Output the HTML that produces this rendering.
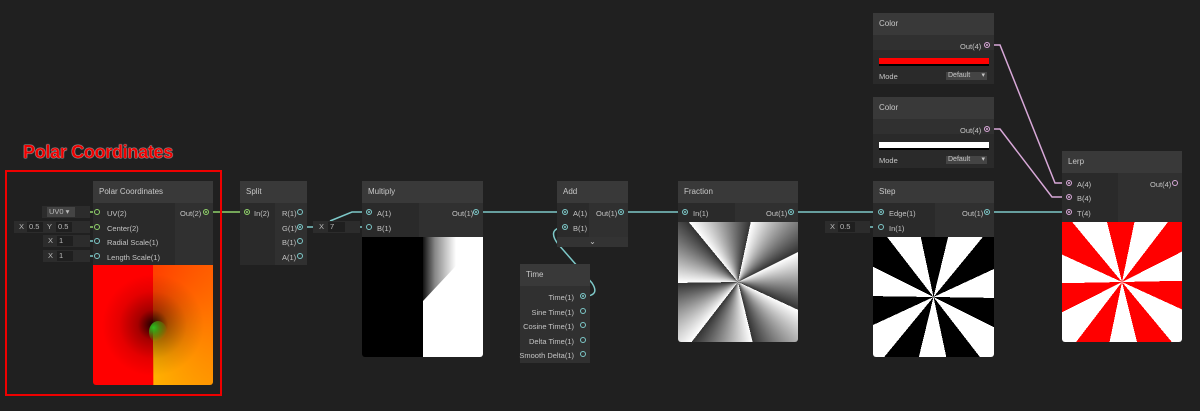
<!DOCTYPE html><html><head><meta charset="utf-8"><style>
*{margin:0;padding:0;box-sizing:border-box}
body{width:1200px;height:411px;background:#202020;position:relative;overflow:hidden;font-family:"Liberation Sans",sans-serif;font-size:7.5px;color:#c4c4c4}
.a{position:absolute}
.hd{background:#393939;color:#c8c8c8;font-size:8px;padding:6px 0 0 6px}
.bl{background:#2a2a2a}.br{background:#303030}
.t{position:absolute;white-space:nowrap}
.f{position:absolute;background:#2c2c2c;height:12px;color:#bbb;font-size:7.5px;line-height:12px}
.f span{position:absolute;background:#1f1f1f;top:1px;height:10px;line-height:10px;padding-left:2px}
.p{position:absolute;width:6px;height:6px;border-radius:50%;border:1.3px solid #7dc8c8}
.p.fill{background:#7dc8c8;box-shadow:inset 0 0 0 1px #2a2a2a}
.g{border-color:#8fd16a}.g.fill{background:#8fd16a}
.k{border-color:#d8a8d8}.k.fill{background:#d8a8d8}
</style></head><body>

<svg class="a" style="left:0;top:0" width="1200" height="411">
<g fill="none" stroke-width="1.5">
<path d="M208 212 L246 212" stroke="#8fd16a"/>
<path d="M301 227 L315 227" stroke="#7dc8c8"/>
<path d="M330 221 L352 212 L369 212" stroke="#7dc8c8"/>
<path d="M476 212 L565 212" stroke="#7dc8c8"/>
<path d="M621 212 L686 212" stroke="#7dc8c8"/>
<path d="M791 212 L881 212" stroke="#7dc8c8"/>
<path d="M987 212 L1069 212" stroke="#7dc8c8"/>
<path d="M565 227 C550 228 552 236 558 244 L592 283 C598 292 594 296 585 296" stroke="#7dc8c8"/>
<path d="M987 45 L1000 45 L1055 183 L1069 183" stroke="#d8a8d8"/>
<path d="M987 129 L1000 129 L1052 197 L1069 197" stroke="#d8a8d8"/>
<path d="M83 212 L98 212 M83 227 L98 227" stroke="#8fd16a"/>
<path d="M83 241 L98 241 M83 256 L98 256 M350 227 L369 227 M864 227 L881 227" stroke="#7dc8c8"/>
</g></svg>

<div class="a" style="left:23px;top:142px;font-size:18px;font-weight:bold;color:#e00;letter-spacing:-0.3px;text-shadow:0 0 1px #fff,0 0 1px #fff">Polar Coordinates</div>
<div class="a" style="left:5px;top:170px;width:217px;height:226px;border:2px solid #e00"></div>

<!-- Polar node -->
<div class="a hd" style="left:93px;top:181px;width:120px;height:22px">Polar Coordinates</div>
<div class="a bl" style="left:93px;top:203px;width:82px;height:62px"></div>
<div class="a br" style="left:175px;top:203px;width:38px;height:62px"></div>
<div class="a" style="left:93px;top:265px;width:120px;height:120px;border-radius:0 0 3px 3px;background:conic-gradient(from 0deg at 50% 50%,#ff4000,#ff7a00 25%,#ffb000 49.8%,#f00 50%,#f00 100%)"></div>
<div class="a" style="left:93px;top:265px;width:120px;height:120px;background:radial-gradient(circle at 50% 50%,rgba(0,0,0,.9) 0,rgba(0,0,0,.35) 18%,rgba(0,0,0,.1) 40%,transparent 60%)"></div>
<div class="a" style="left:149px;top:321px;width:18px;height:22px;border-radius:50%;background:radial-gradient(circle at 25% 30%,#30c020 0,rgba(80,190,20,.5) 35%,transparent 70%)"></div>
<div class="p g" style="left:94px;top:209px"></div><div class="t" style="left:107px;top:209px">UV(2)</div>
<div class="p g" style="left:94px;top:224px"></div><div class="t" style="left:107px;top:224px">Center(2)</div>
<div class="p" style="left:94px;top:238px"></div><div class="t" style="left:107px;top:238px">Radial Scale(1)</div>
<div class="p" style="left:94px;top:253px"></div><div class="t" style="left:107px;top:253px">Length Scale(1)</div>
<div class="t" style="left:180px;top:209px">Out(2)</div><div class="p g fill" style="left:203px;top:209px"></div>

<div class="f" style="left:42px;top:206px;width:48px"><span style="left:5px;width:28px;background:#444">UV0 ▾</span></div>
<div class="f" style="left:14px;top:221px;width:76px"><b style="font-weight:normal;position:absolute;left:5px">X</b><span style="left:13px;width:16px">0.5</span><b style="font-weight:normal;position:absolute;left:33px">Y</b><span style="left:42px;width:16px">0.5</span></div>
<div class="f" style="left:43px;top:235px;width:47px"><b style="font-weight:normal;position:absolute;left:5px">X</b><span style="left:14px;width:16px">1</span></div>
<div class="f" style="left:43px;top:250px;width:47px"><b style="font-weight:normal;position:absolute;left:5px">X</b><span style="left:14px;width:16px">1</span></div>

<!-- Split -->
<div class="a hd" style="left:240px;top:181px;width:67px;height:22px">Split</div>
<div class="a bl" style="left:240px;top:203px;width:35px;height:62px"></div>
<div class="a br" style="left:275px;top:203px;width:32px;height:62px"></div>
<div class="p g fill" style="left:244px;top:209px"></div><div class="t" style="left:254px;top:209px">In(2)</div>
<div class="t" style="left:282px;top:209px">R(1)</div><div class="p" style="left:297px;top:209px"></div>
<div class="t" style="left:282px;top:224px">G(1)</div><div class="p fill" style="left:297px;top:224px"></div>
<div class="t" style="left:282px;top:238px">B(1)</div><div class="p" style="left:297px;top:238px"></div>
<div class="t" style="left:282px;top:253px">A(1)</div><div class="p" style="left:297px;top:253px"></div>

<div class="f" style="left:313px;top:221px;width:47px"><b style="font-weight:normal;position:absolute;left:6px">X</b><span style="left:15px;width:17px">7</span></div>

<!-- Multiply -->
<div class="a hd" style="left:362px;top:181px;width:121px;height:22px">Multiply</div>
<div class="a bl" style="left:362px;top:203px;width:57px;height:34px"></div>
<div class="a br" style="left:419px;top:203px;width:64px;height:34px"></div>
<div class="a" style="left:362px;top:237px;width:121px;height:120px;border-radius:0 0 3px 3px;background:linear-gradient(90deg,#000 50.5%,#fff 50.5%)"></div>
<div class="a" style="left:423px;top:237px;width:60px;height:64px;clip-path:polygon(0 0,100% 0,0 100%);background:linear-gradient(90deg,#111 0,#888 20%,#fff 55%)"></div>
<div class="p fill" style="left:366px;top:209px"></div><div class="t" style="left:377px;top:209px">A(1)</div>
<div class="p" style="left:366px;top:224px"></div><div class="t" style="left:377px;top:224px">B(1)</div>
<div class="t" style="left:452px;top:209px">Out(1)</div><div class="p fill" style="left:473px;top:209px"></div>

<!-- Add -->
<div class="a hd" style="left:557px;top:181px;width:71px;height:22px">Add</div>
<div class="a bl" style="left:557px;top:203px;width:32px;height:34px"></div>
<div class="a br" style="left:589px;top:203px;width:39px;height:34px"></div>
<div class="a" style="left:557px;top:237px;width:71px;height:10px;background:#333;text-align:center;font-size:8px;line-height:9px">⌄</div>
<div class="p fill" style="left:562px;top:209px"></div><div class="t" style="left:573px;top:209px">A(1)</div>
<div class="p fill" style="left:562px;top:224px"></div><div class="t" style="left:573px;top:224px">B(1)</div>
<div class="t" style="left:596px;top:209px">Out(1)</div><div class="p fill" style="left:618px;top:209px"></div>

<!-- Time -->
<div class="a hd" style="left:520px;top:264px;width:70px;height:22px">Time</div>
<div class="a br" style="left:520px;top:286px;width:70px;height:77px"></div>
<div class="t" style="right:626px;top:293px">Time(1)</div><div class="p fill" style="left:580px;top:293px"></div>
<div class="t" style="right:626px;top:308px">Sine Time(1)</div><div class="p" style="left:580px;top:308px"></div>
<div class="t" style="right:626px;top:322px">Cosine Time(1)</div><div class="p" style="left:580px;top:322px"></div>
<div class="t" style="right:626px;top:337px">Delta Time(1)</div><div class="p" style="left:580px;top:337px"></div>
<div class="t" style="right:626px;top:351px">Smooth Delta(1)</div><div class="p" style="left:580px;top:351px"></div>

<!-- Fraction -->
<div class="a hd" style="left:678px;top:181px;width:120px;height:22px">Fraction</div>
<div class="a bl" style="left:678px;top:203px;width:57px;height:19px"></div>
<div class="a br" style="left:735px;top:203px;width:63px;height:19px"></div>
<div class="a" style="left:678px;top:222px;width:120px;height:120px;border-radius:0 0 3px 3px;background:repeating-conic-gradient(from 12deg at 50% 50%,#fff 0deg,#333 51.43deg)"></div>
<div class="p fill" style="left:682px;top:209px"></div><div class="t" style="left:693px;top:209px">In(1)</div>
<div class="t" style="left:766px;top:209px">Out(1)</div><div class="p fill" style="left:788px;top:209px"></div>

<!-- Step -->
<div class="f" style="left:825px;top:221px;width:45px"><b style="font-weight:normal;position:absolute;left:5px">X</b><span style="left:13px;width:17px">0.5</span></div>
<div class="a hd" style="left:873px;top:181px;width:121px;height:22px">Step</div>
<div class="a bl" style="left:873px;top:203px;width:62px;height:34px"></div>
<div class="a br" style="left:935px;top:203px;width:59px;height:34px"></div>
<div class="a" style="left:873px;top:237px;width:121px;height:120px;border-radius:0 0 3px 3px;background:repeating-conic-gradient(from -12deg at 50% 50%,#000 0 25.7deg,#fff 25.7deg 51.43deg)"></div>
<div class="p fill" style="left:878px;top:209px"></div><div class="t" style="left:889px;top:209px">Edge(1)</div>
<div class="p" style="left:878px;top:224px"></div><div class="t" style="left:889px;top:224px">In(1)</div>
<div class="t" style="left:962px;top:209px">Out(1)</div><div class="p fill" style="left:984px;top:209px"></div>

<!-- Color 1 -->
<div class="a hd" style="left:873px;top:13px;width:121px;height:22px">Color</div>
<div class="a br" style="left:873px;top:35px;width:121px;height:15px"></div>
<div class="a bl" style="left:873px;top:50px;width:121px;height:34px"></div>
<div class="a" style="left:879px;top:58px;width:110px;height:8px;background:#f00;border-bottom:2px solid #000"></div>
<div class="t" style="left:960px;top:42px">Out(4)</div><div class="p k fill" style="left:984px;top:42px"></div>
<div class="t" style="left:879px;top:72px">Mode</div>
<div class="a" style="left:946px;top:72px;width:41px;height:8px;background:#444;font-size:7px;line-height:8px;padding-left:2px">Default <span style="float:right;padding-right:2px">▾</span></div>

<!-- Color 2 -->
<div class="a hd" style="left:873px;top:97px;width:121px;height:22px">Color</div>
<div class="a br" style="left:873px;top:119px;width:121px;height:15px"></div>
<div class="a bl" style="left:873px;top:134px;width:121px;height:34px"></div>
<div class="a" style="left:879px;top:142px;width:110px;height:8px;background:#fff;border-bottom:2px solid #000"></div>
<div class="t" style="left:960px;top:126px">Out(4)</div><div class="p k fill" style="left:984px;top:126px"></div>
<div class="t" style="left:879px;top:156px">Mode</div>
<div class="a" style="left:946px;top:156px;width:41px;height:8px;background:#444;font-size:7px;line-height:8px;padding-left:2px">Default <span style="float:right;padding-right:2px">▾</span></div>

<!-- Lerp -->
<div class="a hd" style="left:1062px;top:151px;width:120px;height:22px">Lerp</div>
<div class="a bl" style="left:1062px;top:173px;width:56px;height:49px"></div>
<div class="a br" style="left:1118px;top:173px;width:64px;height:49px"></div>
<div class="a" style="left:1062px;top:222px;width:120px;height:120px;border-radius:0 0 3px 3px;background:repeating-conic-gradient(from -14deg at 50% 50%,#f00 0 25.7deg,#fff 25.7deg 51.43deg)"></div>
<div class="p k fill" style="left:1066px;top:180px"></div><div class="t" style="left:1077px;top:180px">A(4)</div>
<div class="p k fill" style="left:1066px;top:194px"></div><div class="t" style="left:1077px;top:194px">B(4)</div>
<div class="p k fill" style="left:1066px;top:209px"></div><div class="t" style="left:1077px;top:209px">T(4)</div>
<div class="t" style="left:1150px;top:180px">Out(4)</div><div class="p k" style="left:1172px;top:180px"></div>
</body></html>
